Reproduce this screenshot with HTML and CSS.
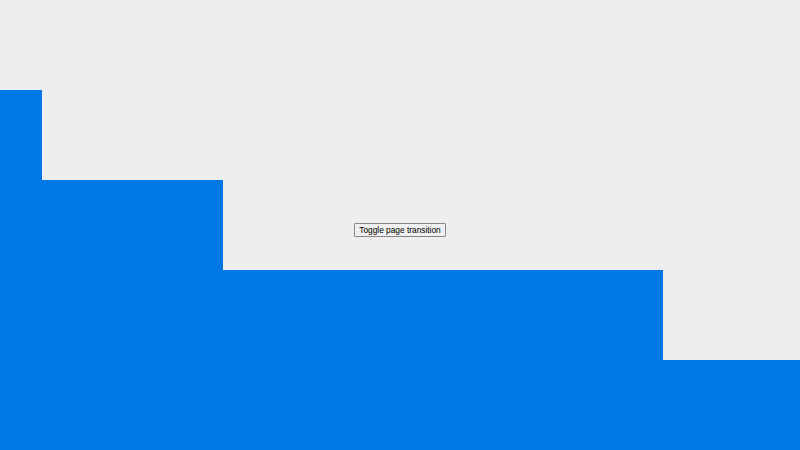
FILE: index.html
```html
<!DOCTYPE html>
<html>
<head>
    <title>Page transition</title>
    <link rel="stylesheet" href="styles.css">
</head>
<body>
    <button class="toggle-button" onclick="toggleTransition()">Toggle page transition</button>
    <div class="transition">
        <div class="bar" style="width: 0%"></div>
        <div class="bar" style="width: 5.3%"></div>
        <div class="bar" style="width: 27.85%"></div>
        <div class="bar" style="width: 82.85%"></div>
        <div class="bar" style="width: 100%"></div>
    </div>
    <script>
        function toggleTransition() {
            document.querySelector('.transition').classList.toggle('hidden');
        }
    </script>
</body>
</html>
```

FILE: styles.css
```css
body {
    font-family: "Liberation Sans", Arial, sans-serif;
    background-color: #eeeeee;
    display: flex;
    justify-content: center;
    align-items: center;
    height: 100vh;
    margin: 5px;
}
.toggle-button {
    font-family: "Liberation Sans", Arial, sans-serif;
    font-size: 8.33px;
    color: #000;
    background-color: #efefef;
    border: 1px solid #858585;
    border-radius: 1px;
    padding: 1px 4px;
    cursor: pointer;
}
.transition {
    position: fixed;
    top: 0;
    left: 0;
    width: 100%;
    height: 100%;
    display: flex;
    flex-direction: column;
    pointer-events: none;
}
.transition.hidden {
    display: none;
}
.bar {
    flex: 1;
    background-color: #0079e6;
}
```
